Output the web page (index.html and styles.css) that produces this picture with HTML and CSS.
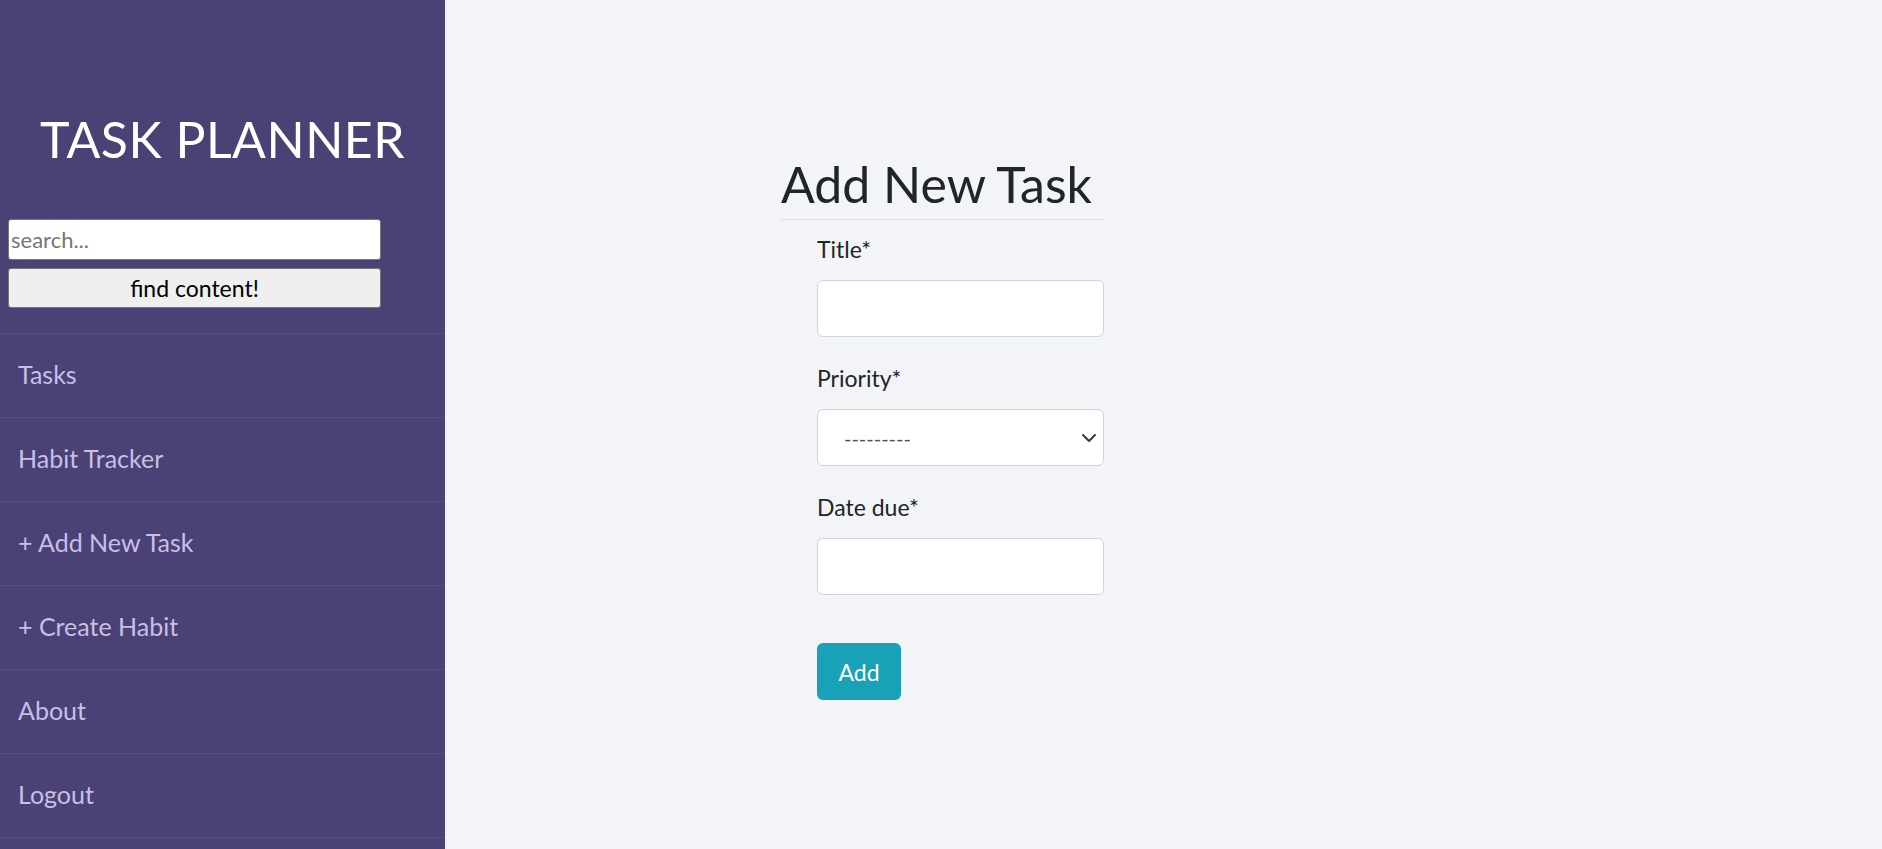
FILE: index.html
```html
<!DOCTYPE html>
<html lang="en">
<head>
<meta charset="utf-8">
<title>Task Planner</title>
<link rel="stylesheet" href="styles.css">
</head>
<body>
<div class="layout">
  <aside class="sidebar">
    <h1 class="brand">TASK PLANNER</h1>
    <form class="search">
      <input class="search-input" type="text" placeholder="search...">
      <button class="search-btn" type="button">find content!</button>
    </form>
    <nav class="nav">
      <a class="nav-item" href="#">Tasks</a>
      <a class="nav-item" href="#">Habit Tracker</a>
      <a class="nav-item" href="#">+ Add New Task</a>
      <a class="nav-item" href="#">+ Create Habit</a>
      <a class="nav-item" href="#">About</a>
      <a class="nav-item" href="#">Logout</a>
    </nav>
  </aside>
  <main class="main">
    <section class="panel">
      <h2 class="page-title">Add New Task</h2>
      <form class="task-form">
        <div class="group">
          <label class="label">Title*</label>
          <input class="control" type="text">
        </div>
        <div class="group">
          <label class="label">Priority*</label>
          <div class="select">
            <span class="select-text">---------</span>
            <svg class="chevron" width="16" height="16" viewBox="0 0 16 16"><path d="M2 5l6 6 6-6" fill="none" stroke="#343a40" stroke-width="2" stroke-linecap="round" stroke-linejoin="round"/></svg>
          </div>
        </div>
        <div class="group">
          <label class="label">Date due*</label>
          <input class="control" type="text">
        </div>
        <button class="add-btn" type="button">Add</button>
      </form>
    </section>
  </main>
</div>
</body>
</html>
```
FILE: styles.css
```css
* { box-sizing: border-box; }
html, body { margin: 0; padding: 0; }
body {
  font-family: Lato, "Noto Sans", sans-serif;
  background: #f3f4f8;
  color: #212529;
}
.layout {
  display: flex;
  min-height: 100vh;
}
.sidebar {
  width: 445px;
  flex: 0 0 445px;
  background: #4a4274;
  display: flex;
  flex-direction: column;
}
.brand {
  margin: 0;
  padding-top: 109px;
  height: 219px;
  text-align: center;
  color: #ffffff;
  font-weight: 400;
  font-size: 50px;
  line-height: 60px;
  letter-spacing: 0.5px;
}
.search {
  display: flex;
  flex-direction: column;
  gap: 8px;
  width: 373px;
  margin-left: 8px;
}
.search-input {
  height: 41px;
  border: 1px solid #767676;
  border-radius: 3px;
  background: #fff;
  font-family: Lato, sans-serif;
  font-size: 22px;
  padding: 0 2px;
  color: #333;
}
.search-input::placeholder { color: #757575; }
.search-btn {
  height: 40px;
  border: 1px solid #767676;
  border-radius: 3px;
  background: #efefef;
  font-family: Lato, sans-serif;
  font-size: 23px;
  color: #000;
}
.nav {
  margin-top: 25px;
  display: flex;
  flex-direction: column;
  border-bottom: 1px solid #544c80;
}
.nav-item {
  height: 84px;
  border-top: 1px solid #544c80;
  display: flex;
  align-items: center;
  padding-left: 18px;
  padding-bottom: 4px;
  color: #c7bfe8;
  text-decoration: none;
  font-size: 25px;
}
.main {
  flex: 1;
  padding-left: 336px;
}
.panel {
  width: 323px;
  padding-top: 154px;
}
.page-title {
  margin: 0;
  font-weight: 400;
  font-size: 50px;
  line-height: 60px;
  color: #212529;
  padding-bottom: 5px;
  border-bottom: 1px solid #dee2e6;
}
.task-form {
  padding-left: 36px;
  padding-top: 14px;
}
.group {
  display: flex;
  flex-direction: column;
  margin-bottom: 26px;
}
.label {
  font-size: 23px;
  line-height: 30px;
  margin-bottom: 16px;
  color: #212529;
}
.control {
  height: 57px;
  width: 287px;
  border: 1px solid #ced4da;
  border-radius: 6px;
  background: #fff;
}
.select {
  height: 57px;
  width: 287px;
  border: 1px solid #ced4da;
  border-radius: 6px;
  background: #fff;
  display: flex;
  align-items: center;
  justify-content: space-between;
  padding: 0 6px 0 26px;
}
.select-text {
  color: #495057;
  font-size: 20px;
}
.chevron { flex: none; }
.add-btn {
  margin-top: 22px;
  width: 84px;
  height: 57px;
  border: none;
  border-radius: 6px;
  background: #17a2b8;
  color: #fff;
  font-family: Lato, sans-serif;
  font-size: 23px;
}
```
